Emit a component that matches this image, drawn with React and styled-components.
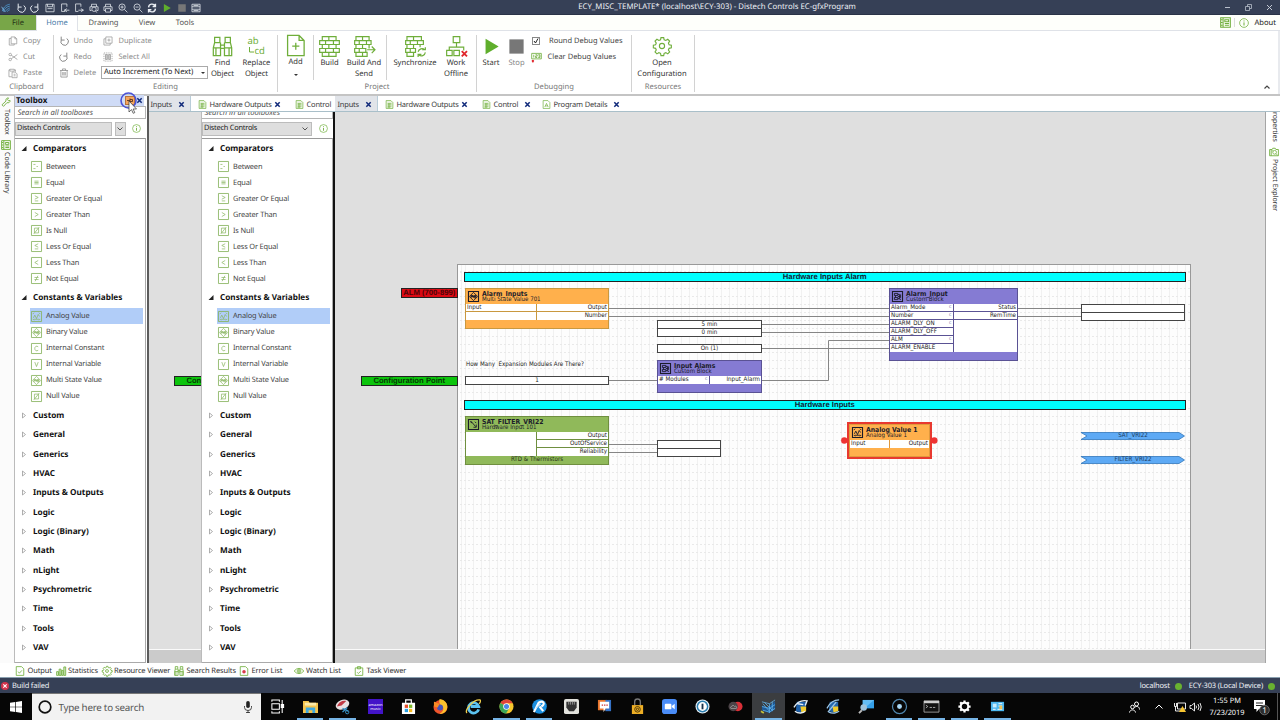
import React from "react";
import styled, { createGlobalStyle, css } from "styled-components";

const GREEN = "#6fae3a";
const NAVY = "#364056";
const UI = `"Noto Sans", "Open Sans", sans-serif`;
const BLOCK = `"DejaVu Sans Condensed", "DejaVu Sans", sans-serif`;

const Global = createGlobalStyle`
  * { box-sizing: border-box; }
  body { margin: 0; overflow: hidden; background: #fff; font-family: ${UI}; font-size: 7.5px; color: #333; text-rendering: geometricPrecision; }
  svg { display: block; flex: none; overflow: visible; }
`;

/* ---------- icons ---------- */

const ICONS = {
  logo: <><path d="M2 13C5 5 9 3 14 2M4 14c2-6 5-8 10-9M7 14c2-4 4-5 7-6M10 14c1-2 2-3 4-3" stroke="#4ea3e0" /><path d="M1 6l5 8" stroke="#8cc4ee" /></>,
  undo: <path strokeWidth="1.600" d="M3.500 1v5.500H9M3.500 6.500A6 6 0 1 0 12.500 4" />,
  redo: <path strokeWidth="1.600" d="M12.500 1v5.500H7M12.500 6.500A6 6 0 1 1 3.500 4" />,
  save: <path d="M1.500 2h13v12h-13zM4 2v4h8V2M4 9h8" />,
  docIn: <path d="M11 6V1.500H2.500v12H8M11 9l-4 2.500L11 14M7 11.500h8" />,
  docOut: <path d="M11 6V1.500H2.500v12H7M11 9l4 2.500-4 2.500M15 11.500H7" />,
  preview: <><path d="M4 6V2h8v4M4 12H1.500V6h13v6H12" /><circle cx="8" cy="10" r="3.500" /><path d="M10 13l3 2" /></>,
  print: <path d="M4 6V2h8v4M4 12H1.500V6h13v6H12M4 9h8v5.500H4z" />,
  zoomIn: <><circle cx="6.500" cy="6.500" r="5" /><path d="M10.500 10.500L15 15M4 6.500h5M6.500 4v5" /></>,
  zoomOut: <><circle cx="6.500" cy="6.500" r="5" /><path d="M10.500 10.500L15 15M4 6.500h5" /></>,
  sync: <path strokeWidth="2.200" d="M2.500 7A5.500 5.500 0 0 1 13 5M13.500 9A5.500 5.500 0 0 1 3 11M13.500 1v4.500H9M2.500 15v-4.500H7" />,
  play: <path d="M3 1.500l11 6.500-11 6.500z" fill="#5fae2c" stroke="none" />,
  stop: <path d="M2 2h12v12H2z" fill="#777" stroke="none" />,
  panel: <path d="M1.500 2h13v12h-13zM1.500 6h13M1.500 10h13M4 4h8M4 12h8" />,
  copy: <path d="M5 1.500h6l3 3v8H5zM11 1.500v3h3M5 4H2v10.500h8v-2" />,
  cut: <><circle cx="3.500" cy="4" r="2" /><circle cx="3.500" cy="12" r="2" /><path d="M5 5l10 7M5 11l10-7" /></>,
  paste: <path d="M3 3H1.500v11H6M3 2h7v3H3zM10 3h2v3M6.500 6.500h5l3 3v6h-8zM9 10h3M9 12.500h3" />,
  trash: <path d="M1.500 4h13M5.500 4V1.500h5V4M3 4v10.500h10V4M6 6.500v5.500M8 6.500v5.500M10 6.500v5.500" />,
  duplicate: <path d="M4.500 1.500h10v10h-10zM4.500 4.500h-3v10h10v-3M9.500 4v5M7 6.500h5" />,
  select: <><path strokeDasharray="2 1.500" d="M1.500 1.500h13v13h-13z" /><path d="M4 4h3v8H4zM9 4h3v8H9z" fill="#ccc" /></>,
  find: <path d="M2 1h4v4H2zM10 1h4v4h-4zM2 5L1 9v6h5.500V5M14 5l1 4v6H9.500V5M6.500 7h3M6.500 9.500h3M1 9h5.500M9.500 9H15M3 9v6M13 9v6" />,
  add: <path d="M2.500 1h8l3.500 3.500V15H2.500zM10.500 1v3.500H14M8.200 6v5M5.700 8.500h5" />,
  bricks: <path d="M2.500 .5h5v3h-5zM7.500 .5h5.500v3H7.500zM.5 3.500h4.500v3H.5zM5 3.500h6v3H5zM11 3.500h4.500v3H11zM2.500 6.500h5v3h-5zM7.500 6.500h5.500v3H7.500zM.5 9.500h4.500v3H.5zM5 9.500h6v3H5zM11 9.500h4.500v3H11zM2.500 12.500h5v3h-5zM7.500 12.500h5.500v3H7.500z" />,
  bricksSend: <><path d="M1.500 .5h5v3h-5zM6.500 .5h5v3h-5zM.5 3.500H4v3H.5zM4 3.500h5.500v3H4zM9.500 3.500H13v3H9.500zM1.500 6.500h5v3h-5zM6.500 6.500h5v3M.5 9.500H4v3H.5zM4 9.500h5v3H4zM1.500 12.500h5v3h-5zM6.500 12.500H10v3H6.500z" /><path d="M10 10.500h6M13.500 8l2.500 2.500-2.500 2.500" /></>,
  bricksSync: <><path d="M1.500 .5h5v3h-5zM6.500 .5h6v3h-6zM.5 3.500H4v3H.5zM4 3.500h5.500v3H4zM9.500 3.500H14v3H9.500zM1.500 6.500h5v3h-5zM6.500 6.500h5v2M.5 9.500H4v3H.5zM4 9.500h4v3H4zM1.500 12.500h5v3h-5z" /><path d="M10 12a3 3 0 0 1 5-1.500M15.500 12.500a3 3 0 0 1-5 1.800M15.500 8.500v2H13M10 16v-2h2.500" /></>,
  offline: <><path d="M5.500 .5h5v4.500h-5zM8 5v4M2.500 11V8.500h11V11M.5 11h4.200v4H.5zM6 11h4.200v4H6z" /><path stroke="#e0262c" strokeWidth="1.400" d="M12 11.500l4 4M16 11.500l-4 4" /></>,
  clearDebug: <><path d="M1 2h14v8H1zM4 4v4M6.500 4H9v2H6.500v2H9M10.500 4H13v4h-2.500M11 6h2" /><path stroke="#e0262c" strokeWidth="2" d="M1.500 12l2.500 2.500M4 12l-2.500 2.500" /></>,
  gear: <><circle cx="8" cy="8" r="2.300" /><path d="M6.800 1h2.400l.4 2 1.500.6 1.700-1.100 1.700 1.700-1.100 1.700.6 1.500 2 .4v2.400l-2 .4-.6 1.500 1.100 1.700-1.700 1.700-1.700-1.100-1.500.6-.4 2H6.800l-.4-2-1.500-.6-1.700 1.100-1.700-1.700 1.100-1.700L2 10.600l-2-.4V7.800l2-.4.6-1.500-1.100-1.700 1.700-1.700 1.700 1.100L6.400 3z" transform="translate(.3 -.5)" /></>,
  info: <><circle cx="8" cy="8" r="7" /><path strokeWidth="1.600" d="M8 7v5M8 4v1.500" /></>,
  book: <path strokeWidth="1.500" d="M1 1h14v14H1zM4.500 1v14M1.500 4h2M1.500 8h2M1.500 12h2M7 4h5.500v3H7zM7 9.500h6M7 12h6" />,
  wrench: <path strokeWidth="1.400" d="M1.500 12.500L8 6.500C7 4 9 1 12 1.500L10.500 4l1.500 2 2.500-.5C15 8.500 12 10 9.500 9L4 15z" />,
  explorer: <><path strokeWidth="1.400" d="M1 4h4l1-2h4l1 2h4v10H1zM3.500 4v10" /><circle cx="9" cy="8.500" r="3" /><path d="M11 10.500l3 3M5 6h2" /></>,
  sheet: <><path d="M2 1h8.500L14 4.500V15H2z" fill="#eef6e6" /><path d="M4.500 6h7M4.500 8.500h7M4.500 11h7M7 6v6.500M4.500 13h5" /></>,
  sheetA: <path d="M2 1h8.500L14 4.500V15H2zM5 12.500L8 6l3 6.500M6 10.500h4" />,
  close: <path stroke="#10297a" strokeWidth="3.500" d="M3 3l10 10M13 3L3 13" />,
  output: <path d="M2 1h8.500L14 4.500V15H2zM5 9l2 2.500 4-4.500" />,
  stats: <path d="M1 9h3v6H1zM5 5h3v10H5zM9 7h2.500v8H9zM12.500 1.500h3V15h-3z" fill="#d5e8c4" />,
  error: <><path d="M2 1h8.500L14 4.500V15H2z" /><circle cx="8" cy="9" r="2.800" fill="#d83a4a" stroke="none" /></>,
  eye: <><path d="M.5 8C4 2.500 12 2.500 15.500 8 12 13.500 4 13.500 .5 8z" /><circle cx="8" cy="8" r="3" /><circle cx="8" cy="8" r="1" /></>,
  task: <path d="M2 3h12v12H2zM5.500 1h5v3.500h-5zM5 10l2 2 4-4" />,
};

const Icon = ({ name, size = 10, color = GREEN, sw = 1.2 }) => (
  <svg width={size} height={size} viewBox="0 0 16 16" fill="none" stroke={color} strokeWidth={sw}>{ICONS[name]}</svg>
);

const TINY = {
  between: "M3.500 5h3M3.500 11h3M8 8h2",
  eq: "M5 6h6M5 8h6M5 10h6",
  ge: "M5.500 4l5 2.500-5 2.500M5.500 11.500h5",
  gt: "M5.500 5l5 3-5 3",
  nul: "M5 4.500h6v7H5zM4 13l8-10",
  le: "M10.500 4l-5 2.500 5 2.500M5.500 11.500h5",
  lt: "M10.500 5l-5 3 5 3",
  ne: "M5 6.500h6M5 9.500h6M6 12l4-8",
  av: "M3.500 10l2-4 2.500 5 2.500-6 2 3M2.500 4.500l2-2M11.500 2.500l2 2M2.500 11.500l2 2M11.500 13.500l2-2M4 12h8",
  bv: "M8 2l6 6-6 6-6-6zM4.500 10V6.500h3V10M9 6.500h2.500V10H9zM4 8h8",
  c: "M10.500 5.500C8 3.500 5.500 5 5.500 8s2.500 4.500 5 2.500",
  v: "M5.500 4.500L8 11l2.500-6.500",
  block: "M3.500 3.500h5v3h-5zM3.500 9.500h5v3h-5zM5 6.500v3M8.500 5H11v6H8.500M10 11l3 1.500M12.500 5v5M8.500 8h3",
  hw: "M3 4h2l6 7M5 4v2M12 8v4H8M10 4l2 2",
};

const Tiny = ({ name, color = "#86b35c", size = 11, sw = 1 }) => (
  <svg width={size} height={size} viewBox="0 0 16 16" fill="none" stroke={color} strokeWidth={sw}>
    <path d="M.700 .700h14.600v14.600H.700z" strokeWidth={sw * 1.2} />
    <path d={TINY[name]} />
  </svg>
);

/* ---------- frame ---------- */

const Screen = styled.div`
  width: 1280px; height: 720px; display: flex; flex-direction: column; overflow: hidden; white-space: nowrap;
`;
const TitleBar = styled.header`
  height: 15px; background: ${NAVY}; color: #eef1f6; display: grid; grid-template-columns: 205px 1fr 53px;
  align-items: center; border-bottom: 1px solid #2a3347;
`;
const QuickBar = styled.div`display: flex; gap: 4.65px; padding-left: 1px;`;
const WindowTitle = styled.div`text-align: center; font-size: 7.8px; line-height: 15px; padding-left: 2px;`;
const WindowButtons = styled.div`display: flex; gap: 14px; justify-content: flex-end; padding-right: 7px;`;
const MenuBar = styled.nav`
  height: 16px; background: #fefffb; display: flex; align-items: stretch; border-bottom: 1px solid #dfe2e8; font-size: 7.6px; line-height: 16px;
`;
const MenuTab = styled.div`
  width: ${(p) => p.$w}px; text-align: center; color: #555;
  ${(p) => p.$file && css`background: #78a648; color: #243316;`}
  ${(p) => p.$active && css`background: #fff; color: #4a7ba8; border: 1px solid #dfe2e8; border-bottom: 0; margin-bottom: -1px; line-height: 14px;`}
`;
const MenuRight = styled.div`margin-left: auto; display: flex; align-items: center; padding-right: 4px; color: #222;`;
const MenuRule = styled.i`width: 1px; height: 9px; background: #ddd; margin: 0 4px 0 3px;`;
const About = styled.span`margin-left: 5px;`;

/* ---------- ribbon ---------- */

const Ribbon = styled.section`
  height: 63px; background: #fff; display: flex; padding-top: 4px; border-right: 2px solid #e8eaee;
`;
const RibbonGroup = styled.div`
  width: ${(p) => p.$w}px; height: 57px; border-right: 1px solid #d2d2d2; display: flex; flex-direction: column;
`;
const GroupBody = styled.div`height: 47px; display: flex;`;
const GroupName = styled.div`text-align: center; color: #777; font-size: 7.6px; line-height: 10px;`;
const SmallColumn = styled.div`width: ${(p) => p.$w}px; display: flex; flex-direction: column;`;
const SmallButton = styled.div`
  height: 16px; margin-top: ${(p) => p.$mt || 0}px; display: flex; align-items: center; gap: ${(p) => p.$gap || 6}px;
  padding-left: ${(p) => p.$pl || 0}px; color: ${(p) => (p.$on ? "#444" : "#8c8c8c")}; font-size: 7.5px; line-height: 16px;
`;
const Combo = styled.div`
  width: 107px; height: 13px; margin-top: 1px; border: 1px solid #aaa; display: flex; justify-content: space-between; align-items: center;
  padding: 0 2px; font-size: 7.6px; line-height: 11px; color: #222;
`;
const Caret = styled.i`border: 2px solid transparent; border-top-color: #333; border-bottom: 0;`;
const BigButton = styled.div`
  width: ${(p) => p.$w}px; display: flex; flex-direction: column; align-items: center; color: ${(p) => (p.$dim ? "#888" : "#333")};
  font-size: 7.6px; line-height: 11px; text-align: center; white-space: pre;
`;
const BigIcon = styled.div`height: 24px; margin-top: -1px; display: flex; align-items: center;`;
const Rule = styled.i`width: 1px; height: 45px; background: #d2d2d2; margin-left: ${(p) => p.$ml || 0}px;`;
const Collapse = styled.div`margin-left: auto; align-self: flex-end; padding: 0 8px 5px 0;`;
const Check = styled.i`
  width: 8px; height: 8px; border: 1px solid #888; display: grid; place-items: center;
`;
const AbCd = styled.div`
  color: ${GREEN}; font-size: 9.5px; line-height: 10px; text-align: left; width: 18px; position: relative;
  span { display: block; } span + span { padding-left: 7px; }
  svg { position: absolute; left: 1px; top: 11px; }
`;

/* ---------- work area ---------- */

const Work = styled.main`
  height: 569px; display: grid; grid-template-columns: 14px 135px 186px 945px; border-top: 2px solid #c4c4c4;
`;
const Rail = styled.aside`
  display: flex; flex-direction: column; align-items: center; font-size: 7px; line-height: 12px; color: #333; overflow: hidden;
`;
const RailText = styled.span`writing-mode: vertical-rl; height: ${(p) => p.$h}px; flex: none;`;
const LeftRail = styled(Rail)`padding: 1px 3px 0 0; background: #fbfbfb; gap: 2px;`;
const RightRail = styled(Rail)`width: 14px; padding-left: 2px; gap: 2px;`;
const ToolPanel = styled.section`
  display: flex; flex-direction: column; height: 567px; min-width: 0; overflow: hidden; background: #fff;
`;
const DockPanel = styled(ToolPanel)`border-left: 1px solid #bbb; border-right: 2px solid #5c5c5c; overflow: visible;`;
const ClippedPanel = styled(ToolPanel)`
  height: 551px; width: 134px; border-left: 1px solid #bbb; border-right: 2px solid #111;
`;
const PanelHead = styled.div`
  height: 11px; flex: none; width: 129px; margin-top: -1px; background: #cfdbf6; color: #111; font-weight: 700; font-size: 8.1px; line-height: 10px;
  display: flex; align-items: center; padding: 0 1px; position: relative;
`;
const Pin = styled.i`margin-left: auto; width: 10px; height: 9px; background: #f6a55c; border: 1px solid #b9743a; margin-right: 1px; display: grid; place-items: center;`;
const Search = styled.div`
  height: 13px; flex: none; width: 131px; margin-top: ${(p) => p.$mt || 0}px; border: 1px solid #b5b5b5; border-left: 0; padding-left: 2.500px;
  font-style: italic; color: #555; font-size: 7.6px; line-height: 12.500px;
`;
const Picker = styled.div`height: 19px; flex: none; display: flex; align-items: center;`;
const PickerBox = styled.div`
  width: ${(p) => p.$w}px; height: 14px; background: #dedede; border: 1px solid #bcbcbc; padding: 0 3px 0 1px; font-size: 7.4px; letter-spacing: -.24px;
  line-height: 13px; color: #222; display: flex; justify-content: space-between; align-items: center; margin-right: ${(p) => p.$mr || 0}px;
`;
const Tree = styled.div`
  flex: 1; width: 131px; border-top: 1px solid #999; border-right: 1px solid #aaa; border-bottom: 1px solid #aaa; overflow: hidden;
  > :first-child { margin-top: -.400px; }
`;
const TreeHead = styled.div`
  height: 19.35px; display: flex; align-items: center; padding-left: 5.500px; font-weight: 700; font-size: 8.2px; color: #111;
  svg { margin-right: 5.500px; }
`;
const TreeItems = styled.div`padding: 1px 2px 1.200px 15px;`;
const TreeItem = styled.div`
  height: 16px; display: flex; align-items: center; gap: 4px; padding-left: 1px; color: #444; font-size: 7.4px; letter-spacing: -.15px;
  background: ${(p) => (p.$sel ? "#b1cdf8" : "transparent")};
`;
const Middle = styled.div`overflow: hidden; display: flex; flex-direction: column;`;
const MiddleBody = styled.div`display: flex; height: 551px;`;
const Right = styled.div`display: flex; flex-direction: column; overflow: hidden;`;
const RightBody = styled.div`display: flex; height: 551px;`;

const TabStrip = styled.div`height: 16px; flex: none; display: flex; background: #fff; overflow: hidden;
  border-bottom: 1px solid #a9bfc9;`;
const Tab = styled.div`
  width: ${(p) => p.$w}px; flex: none; display: flex; align-items: center; gap: 2.500px; padding: 2px ${(p) => p.$pr || 5}px 0 7px;
  font-size: 7.5px; letter-spacing: -.2px; color: #3c3c3c;
`;
const TabLabel = styled.span`flex: 1;`;
const CutTab = styled(Tab)`
  background: #e1e4e9; padding-left: 0; justify-content: flex-end; overflow: hidden; gap: 6px; border-right: 1px solid #b9cdd9;
`;
const Canvas = styled.div`
  width: ${(p) => p.$w}px; flex: none; height: 551px; background: #dfdfdf; position: relative; overflow: hidden;
  border-right: ${(p) => (p.$edge ? "1px solid #a5a5a5" : "0")};
`;
const ScrollTrack = styled.div`
  position: absolute; left: 0; right: 0; bottom: 0; height: 14px; background: #cbcbcb; border-top: 1px solid #fafafa;
`;

/* ---------- diagram ---------- */

const ORIGIN = { x: 335, y: 112 };
const Placed = styled.div`
  position: absolute; left: ${(p) => p.$x - (p.$ox ?? ORIGIN.x)}px; top: ${(p) => p.$y - ORIGIN.y}px;
  width: ${(p) => p.$w}px; height: ${(p) => p.$h}px; font-family: ${BLOCK}; font-size: 6.2px; line-height: 7px; color: #222;
`;
const Page = styled(Placed)`
  border: 1px solid #999; border-bottom: 0; background-color: #fdfdfd;
  background-image: repeating-linear-gradient(90deg, #fdfdfd 0 2px, transparent 2px 4px),
    repeating-linear-gradient(#e9e9e9 0 1px, transparent 1px 8px), repeating-linear-gradient(90deg, #f1f1f1 0 1px, transparent 1px 8px);
  background-position: 0 0, 0 7px, 7px 0;
`;
const Banner = styled(Placed)`
  background: ${(p) => p.$bg || "#00ffff"}; border: 1px solid #222; font-family: "Liberation Sans", sans-serif; font-weight: 700;
  font-size: 7.7px; line-height: 8.500px; text-align: center; color: ${(p) => p.$fg || "#123"};
`;
const Value = styled(Placed)`background: #fff; border: 1px solid #444; text-align: center; line-height: 7px;`;
const Note = styled(Placed)`color: #222; line-height: 9px;`;
const Block = styled(Placed)`
  background: ${(p) => p.$c}; border: 1px solid ${(p) => p.$line}; display: flex; flex-direction: column;
  ${(p) => p.$hot && css`outline: 2px solid #e8392f; outline-offset: 0;`}
`;
const BlockHead = styled.div`height: 15px; flex: none; display: flex; align-items: center; gap: 3px; padding-left: 2px; line-height: 6px; font-size: 6.1px; color: #1c1c2a;
  b { display: block; font-size: 6.8px; line-height: 6px; }`;
const Ports = styled.div`display: grid; grid-template-columns: 1fr 1fr; background: #fff; height: ${(p) => p.$n * 8}px; flex: none;`;
const PortColumn = styled.div`
  border-right: ${(p) => (p.$first ? `1px solid ${p.$line}` : 0)}; text-align: ${(p) => (p.$first ? "left" : "right")};
`;
const Port = styled.div`
  height: 8px; padding: 0 1px; line-height: 7.500px; border-bottom: ${(p) => (p.$last ? 0 : `1px solid ${p.$line}`)};
  display: flex; justify-content: ${(p) => (p.$right ? "flex-end" : "space-between")};
  i { font-style: normal; color: #77a; font-size: 5px; }
`;
const BlockFoot = styled.div`flex: 1; text-align: center; line-height: 8px; color: #263015;`;
const Wires = styled.svg`position: absolute; left: 0; top: 0;`;
const Flag = styled(Placed)`
  display: grid; text-align: center; line-height: 8px; color: #1d3a5c;
  > * { grid-area: 1 / 1; position: relative; }
`;

const FunctionBlock = ({ x, y, w, h, color, line, hot, icon, title, sub, left = [], right = [], rows, foot }) => {
  const n = rows || Math.max(left.length, right.length);
  return (
    <Block $x={x} $y={y} $w={w} $h={h} $c={color} $line={line} $hot={hot}>
      <BlockHead><Tiny name={icon} color="#1c1c2a" size={11} sw={1.3} /><div><b>{title}</b>{sub}</div></BlockHead>
      <Ports $n={n}>
        <PortColumn $first $line={line}>{left.map(([t, dot], i) => <Port key={i} $line={line} $last={i === n - 1}><span>{t}</span>{dot && <i>c</i>}</Port>)}</PortColumn>
        <PortColumn>{right.map((t, i) => <Port key={i} $right $line={line} $last={i === n - 1}>{t}</Port>)}</PortColumn>
      </Ports>
      <BlockFoot>{foot}</BlockFoot>
    </Block>
  );
};

const OutFlag = ({ x, y, text }) => (
  <Flag $x={x} $y={y} $w={104} $h={8}>
    <svg width="104" height="8" viewBox="0 0 104 8"><path d="M0 .5h98l5.500 3.500-5.500 3.500H0L6 4z" fill="#5eaaf5" stroke="#3277bb" strokeWidth=".8" /></svg>
    <span>{text}</span>
  </Flag>
);

const VALUES = [
  [657, 320, 105, "5 min", 9], [657, 328, 105, "0 min", 9], [657, 344, 105, "On (1)", 9], [465, 376, 144, "1", 9],
  [1081, 304, 104, "", 9], [1081, 312, 104, "", 9], [657, 440, 64, "", 9], [657, 448, 64, "", 9],
];
const WIRES = "M609 308.500H889M609 316.500H889M761 324.500H889M761 332.500H889M761 348.500H889M609 380.500H657M761 380.500H828.500V340.500H889M1017 308.500H1081M1017 316.500H1081M609 444.500H657M609 452.500H657";

const Diagram = () => (
  <Canvas $w={931} $edge>
    <Page $x={457} $y={264} $w={734} $h={386} />
    <Wires width="931" height="551" viewBox={`${ORIGIN.x} ${ORIGIN.y} 931 551`} fill="none" stroke="#858585" strokeWidth="1"><path d={WIRES} /></Wires>
    <Banner $x={464} $y={272} $w={721.500} $h={10}>Hardware Inputs Alarm</Banner>
    <Banner $x={464} $y={400} $w={721.500} $h={10}>Hardware Inputs</Banner>
    <Banner $x={401} $y={288} $w={56.500} $h={10} $bg="#dc0a14" $fg="#4a0508">ALM (700-899)</Banner>
    <Banner $x={361} $y={376} $w={96.500} $h={10} $bg="#0cc40c" $fg="#063806">Configuration Point</Banner>
    {VALUES.map(([x, y, w, t, h], i) => <Value key={i} $x={x} $y={y} $w={w} $h={h}>{t}</Value>)}
    <Note $x={466} $y={360} $w={130} $h={8}>How Many&nbsp; Expansion Modules Are There?</Note>
    <FunctionBlock x={465} y={288} w={144} h={41} color="#ffb04c" line="#c9983f" icon="bv" title="Alarm_Inputs" sub="Multi State Value 701" left={[["Input"], [""]]} right={["Output", "Number"]} />
    <FunctionBlock x={889} y={288} w={129} h={73} color="#857bd3" line="#5a5294" icon="block" title="Alarm_Input" sub="Custom Block"
      left={[["Alarm_Mode", 1], ["Number", 1], ["ALARM_DLY_ON", 1], ["ALARM_DLY_OFF"], ["ALM", 1], ["ALARM_ENABLE"]]} right={["Status", "RemTime"]} />
    <FunctionBlock x={657} y={360} w={105} h={33} color="#857bd3" line="#5a5294" icon="block" title="Input Alams" sub="Custom Block" left={[["# Modules", 1]]} right={["Input_Alarm"]} />
    <FunctionBlock x={465} y={416} w={144} h={49} color="#90b95a" line="#6f8f3f" icon="hw" title="SAT_FILTER_VRI22" sub="Hardware Input 101" right={["Output", "OutOfService", "Reliability"]} foot="RTD & Thermistors" />
    <FunctionBlock x={849} y={424} w={81} h={33} color="#ffb04c" line="#e0993c" hot icon="av" title="Analog Value 1" sub="Analog Value 1" left={[["Input"]]} right={["Output"]} />
    <Wires width="931" height="551" viewBox={`${ORIGIN.x} ${ORIGIN.y} 931 551`} fill="#ee3333"><circle cx="844.300" cy="440.500" r="3.200" /><circle cx="934.300" cy="440.500" r="3.200" /></Wires>
    <OutFlag x={1081} y={432} text="SAT_VRI22" />
    <OutFlag x={1081} y={456} text="FILTER_VRI22" />
    <ScrollTrack />
  </Canvas>
);

/* ---------- toolbox ---------- */

const COMPARATORS = [["between", "Between"], ["eq", "Equal"], ["ge", "Greater Or Equal"], ["gt", "Greater Than"], ["nul", "Is Null"], ["le", "Less Or Equal"], ["lt", "Less Than"], ["ne", "Not Equal"]];
const CONSTANTS = [["av", "Analog Value"], ["bv", "Binary Value"], ["c", "Internal Constant"], ["v", "Internal Variable"], ["bv", "Multi State Value"], ["nul", "Null Value"]];
const CLOSED = ["Custom", "General", "Generics", "HVAC", "Inputs & Outputs", "Logic", "Logic (Binary)", "Math", "nLight", "Psychrometric", "Time", "Tools", "VAV"];

const Arrow = ({ open }) => (
  <svg width="7" height="7" viewBox="0 0 7 7">
    {open ? <path d="M5.500 1v5h-5z" fill="#222" /> : <path d="M1.500 1L4.500 3.500 1.500 6z" fill="none" stroke="#999" strokeWidth=".8" />}
  </svg>
);
const Category = ({ name, items, selected }) => (
  <>
    <TreeHead><Arrow open={!!items} />{name}</TreeHead>
    {items && <TreeItems>{items.map(([ic, t]) => <TreeItem key={t} $sel={t === selected}><Tiny name={ic} />{t}</TreeItem>)}</TreeItems>}
  </>
);
const ToolTree = () => (
  <Tree>
    <Category name="Comparators" items={COMPARATORS} />
    <Category name="Constants & Variables" items={CONSTANTS} selected="Analog Value" />
    {CLOSED.map((c) => <Category key={c} name={c} />)}
  </Tree>
);
const Chevron = () => <svg width="6" height="4" viewBox="0 0 6 4"><path d="M.5 .5L3 3 5.500 .5" fill="none" stroke="#444" strokeWidth=".9" /></svg>;

const CursorMark = styled.div`position: absolute; left: 105px; top: -3px; z-index: 3;`;
const Pointer = () => (
  <CursorMark>
    <svg width="24" height="24" viewBox="0 0 24 24">
      <circle cx="8.500" cy="8.500" r="7.500" fill="none" stroke="#4a52d6" strokeWidth="1.600" />
      <path d="M9 9v11l2.500-2.400 1.700 3.700 1.600-.7-1.700-3.600h3.400z" fill="#fff" stroke="#333" strokeWidth=".7" />
    </svg>
  </CursorMark>
);
const CloseMark = () => <Icon name="close" size={7} />;
const Docs = ({ full }) => (
  <TabStrip>
    <CutTab $w={full ? 43 : 42}><span>Inputs</span><CloseMark /></CutTab>
    <Tab $w={97} $pr={11}><Icon name="sheet" size={9} /><TabLabel>Hardware Outputs</TabLabel><CloseMark /></Tab>
    <Tab $w={full ? 60 : 47} $pr={full ? 4.5 : 1}><Icon name="sheet" size={9} /><TabLabel>Control</TabLabel>{full && <CloseMark />}</Tab>
    {full && <Tab $w={89} $pr={4.5}><Icon name="sheetA" size={9} /><TabLabel>Program Details</TabLabel><CloseMark /></Tab>}
  </TabStrip>
);

/* ---------- bottom ---------- */

const OutputTabs = styled.div`height: 14px; background: #fff; display: flex; font-size: 7.5px; letter-spacing: -.12px; line-height: 13px; padding: 2px 0 0 15px; color: #333;`;
const OutputTab = styled.div`width: ${(p) => p.$w}px; flex: none; display: flex; align-items: center; gap: 2.500px;`;
const Status = styled.footer`
  height: 16px; background: ${NAVY}; border-top: 1px solid #8aa0b0; color: #eef1f6; display: flex; align-items: center; font-size: 7.5px; letter-spacing: -.18px;
  padding: 1px 5px 0 1px; gap: 3px;
`;
const Spacer = styled.i`flex: 1;`;
const Dot = styled.i`width: 7px; height: 7px; border-radius: 50%; background: #69b130; margin: 0 ${(p) => p.$m || 0}px 0 2px;`;
const Taskbar = styled.div`height: 27px; background: #060606; display: flex; color: #fff;`;
const StartButton = styled.div`width: 32px; display: grid; place-items: center;`;
const SearchBox = styled.div`
  width: 229px; background: #f2f2f2; border-top: 1px solid #777; display: flex; align-items: center; gap: 6.500px; padding: 0 9px 0 6px; color: #555;
  font-size: 9.800px; letter-spacing: -.25px;
  svg:last-child { margin-left: auto; }
`;
const TaskButton = styled.div`
  width: 32.720px; flex: none; display: grid; place-items: center; position: relative; background: ${(p) => (p.$active ? "#3b3d40" : "none")};
  &::after { content: ""; position: absolute; bottom: 0; left: 3px; right: 3px; height: 2px; background: ${(p) => (p.$run ? "#76b4e6" : "transparent")}; }
`;
const Tray = styled.div`margin-left: auto; display: flex; align-items: center; padding-right: 2px;`;
const Clock = styled.div`width: 42px; text-align: center; font-size: 7.4px; line-height: 12px; margin: 0 4px 0 4px;`;
const DesktopEdge = styled.i`width: 1px; height: 27px; background: #555; margin-left: 5px;`;

const W = { fill: "none", stroke: "#fff", strokeWidth: 1.1 };
const APPS = [
  ["view", 0, <g {...W}><path d="M2 3V1h8v2M2 5h8v6H2zM2 13v2h8v-2M13 1v14" /><path d="M12 6h2.500v3H12z" fill="#fff" /></g>],
  ["files", 1, <><path d="M0 2h6l1 2h9v11H0z" fill="#f4c44e" /><path d="M2 4h12v3H2z" fill="#fbe9a8" /><path d="M3 15V9h10v6h-3v-3H6v3z" fill="#3fa9e0" /></>],
  ["snip", 1, <><ellipse cx="8" cy="6" rx="7.500" ry="5" fill="#e9e2e2" transform="rotate(-20 8 6)" /><path d="M2 8c2-5 6-7 10-6l-5 5z" fill="#c23b45" /><path d="M8 10l6 3M13 9l-5 5" stroke="#3b94c9" strokeWidth="1.500" /><circle cx="13" cy="14" r="1.800" fill="none" stroke="#3b94c9" /></>],
  ["music", 0, <><path d="M0 0h16v16H0z" fill="#4314c8" /><text x="8" y="7" fontSize="4" fill="#fff" textAnchor="middle">amazon</text><text x="8" y="12" fontSize="4" fill="#fff" textAnchor="middle">music</text></>],
  ["store", 0, <><path d="M1 4h14v12H1z" fill="#fff" /><path d="M5 5V1h6v4" fill="none" stroke="#fff" strokeWidth="1.300" /><path d="M4 6h3.500v3.500H4z" fill="#e84f2a" /><path d="M8.500 6H12v3.500H8.500z" fill="#7db928" /><path d="M4 10.500h3.500V14H4z" fill="#2a9fe0" /><path d="M8.500 10.500H12V14H8.500z" fill="#f5b81e" /></>],
  ["firefox", 0, <><circle cx="8" cy="8.500" r="7.500" fill="#f0552b" /><path d="M7 0c7 1 9 6 8 10-1 4-5 6-8 6 5-3 5-7 2-9C7 6 6 3 7 0z" fill="#fbc12c" /><circle cx="7.500" cy="9" r="3.200" fill="#4653b8" /><path d="M1 3c2 0 3 2 6 2L5 9 1 8z" fill="#f98b24" /></>],
  ["ie", 0, <><path d="M13.500 11A5.500 5.500 0 1 1 13.500 8H5" fill="none" stroke="#5cc3f1" strokeWidth="3" /><path d="M1 15C-2 12 8 0 15 1c1 1 0 3-1 4" fill="none" stroke="#f0cf4d" strokeWidth="1.400" /></>],
  ["chrome", 1, <><circle cx="8" cy="8" r="7.500" fill="#f6c62d" /><path d="M8 8L1.500 4.200A7.500 7.500 0 0 1 14.700 4.500H8z" fill="#e0443a" /><path d="M8 8L1.500 4.200A7.500 7.500 0 0 0 7.500 15.500L11 9.500z" fill="#3ba757" /><circle cx="8" cy="8" r="3.500" fill="#fff" /><circle cx="8" cy="8" r="2.700" fill="#4a86e8" /></>],
  ["revu", 1, <><circle cx="8" cy="8" r="7.800" fill="#1a8fe0" /><path d="M2 14L7 4c5-3 8 1 3 4M8 8l4 5" fill="none" stroke="#fff" strokeWidth="2.200" /><path d="M4 10l5-5" stroke="#bfe3fa" strokeWidth="1.500" /></>],
  ["port", 0, <><rect width="16" height="16" rx="2" fill="#e3e3de" /><path d="M2.500 3h11v6l-3 4h-5l-3-4z" fill="#333" /><path d="M5 3v3M7 3v3M9 3v3M11 3v3" stroke="#aaa" strokeWidth=".8" /></>],
  ["chat", 0, <><path d="M1 1h10v11H1z" fill="#e9742a" /><path d="M9 1h6v12H9z" fill="#3572c6" /><path d="M3 3h10v7H9l-2 4V10H3z" fill="#fff" /><path d="M5 6.500h1.500M7.500 6.500H9M10 6.500h1.500" stroke="#c33" strokeWidth="1.200" /></>],
  ["lock", 0, <><path d="M5 7V3a3 3 0 0 1 6 0v4" fill="none" stroke="#777" strokeWidth="1.400" /><path d="M2 6.500h12V16H2z" fill="#edae25" /><circle cx="8" cy="11" r="3" fill="none" stroke="#4a3508" /><circle cx="8" cy="11" r="1.200" fill="none" stroke="#4a3508" /></>],
  ["zoom", 0, <><rect width="16" height="16" rx="3" fill="#4a8cf7" /><rect x="3" y="5" width="7" height="6" rx="1" fill="#fff" /><path d="M10.500 7.500L13.500 5v6l-3-2.500z" fill="#fff" /></>],
  ["onepass", 0, <><circle cx="8" cy="8" r="7.500" fill="#e9f1f7" /><circle cx="8" cy="8" r="5.500" fill="#fff" stroke="#2b7dae" strokeWidth="1.600" /><path d="M7 5h2v6H7z" fill="#17324a" /></>],
  ["cloud", 0, <><circle cx="10.500" cy="8" r="5" fill="#d93038" /><circle cx="5.500" cy="8" r="5" fill="#4b4347" /><path d="M3 10h6c1-2-1-3-2-2-1-2-3-1-3 0-1 0-2 1-1 2z" fill="none" stroke="#999" /></>],
  ["gfx", 2, <><path d="M1 7l6 2 8-7v9l-6 4-8-3z" fill="#1d5a98" /><path d="M1 3l8 2 6-4M1 8l8 2 6-4M2 5l7 8M9 5v10M12 3v10M4 4l8 8M2 12l7 2 6-4" fill="none" stroke="#65b7ee" strokeWidth=".8" /><path d="M0 13l3 2" stroke="#c9c33a" strokeWidth="1.800" /></>],
  ["net1", 0, <><path d="M4 3h10v6l-4 6-7-2z" fill="#1c5ea8" /><path d="M8 8h6v5l-5 2z" fill="#f0ca2c" /><path d="M1 9C5 2 10 1 15 2l-2 5M5 5l6 1M2 13c4 3 9 2 11 0" fill="none" stroke="#e6eef4" strokeWidth="1.500" /></>],
  ["net2", 0, <><path d="M4 3h9v9l-3 3-7-2z" fill="#2467ad" /><path d="M7 8h6v5l-5 1z" fill="#f0ca2c" /><path d="M1 10C4 4 9 1 14 1M2 14l5-6 4-5M3 14c4 2 9 1 11-1" fill="none" stroke="#9cc6e6" strokeWidth="1.300" /></>],
  ["remote", 0, <><path d="M4 1h12v9H4z" fill="#35a0ea" /><path d="M4 1h12L8 8H4z" fill="#64bdf5" /><circle cx="5" cy="9" r="3.500" fill="#9fc3dc" /><path d="M3 12l-3 3" stroke="#bbb" strokeWidth="2" /></>],
  ["rec", 1, <><circle cx="8" cy="8" r="7.500" fill="none" stroke="#4f86ae" strokeWidth="1.300" /><circle cx="8" cy="8" r="2.600" fill="#a9d9f7" /></>],
  ["cmd", 1, <><path d="M0 2h16v12H0z" fill="#111" stroke="#bbb" strokeWidth=".8" /><path d="M0 2h16v2.500H0z" fill="#ccc" /><path d="M2 6.500l2 1.500-2 1.500M6 9h2.500M9.500 9H12" stroke="#ccc" fill="none" strokeWidth=".8" /></>],
  ["set", 1, <><circle cx="8" cy="8" r="4" fill="none" stroke="#fff" strokeWidth="2.200" /><path d="M8 1.500v2M8 12.500v2M1.500 8h2M12.500 8h2M3.400 3.400l1.500 1.500M11.100 11.100l1.500 1.500M3.400 12.600l1.500-1.500M11.100 4.900l1.500-1.500" stroke="#fff" strokeWidth="2.400" /></>],
  ["panel", 1, <><path d="M1 3h14v10H1z" fill="#4db7ef" /><path d="M3 5h4v4H3z" fill="#c9ecfc" /><path d="M9 5h4M9 7.500h4M3 11h3M8 11h5" stroke="#fff" /><path d="M10 7h3v4h-3z" fill="#f0c45a" /></>],
];

const QUICK = ["logo", "undo", "redo", "save", "docIn", "docOut", "preview", "print", "zoomIn", "zoomOut", "sync", "play", "stop", "panel"];
const OUTPUTS = [["output", "Output", 40.500], ["stats", "Statistics", 46], ["gear", "Resource Viewer", 72.5], ["find", "Search Results", 65], ["error", "Error List", 54.5], ["eye", "Watch List", 60.500], ["task", "Task Viewer", 60]];

export default function App() {
  return (
    <Screen>
      <Global />
      <TitleBar>
        <QuickBar>{QUICK.map((n) => <Icon key={n} name={n} color="#e9edf3" />)}</QuickBar>
        <WindowTitle>ECY_MISC_TEMPLATE* (localhost\ECY-303) - Distech Controls EC-gfxProgram</WindowTitle>
        <WindowButtons>
          <svg width="7" height="7" viewBox="0 0 7 7"><path d="M1 3.500h5" stroke="#b9c0cc" /></svg>
          <svg width="7" height="7" viewBox="0 0 7 7"><path d="M.5 2.500h4v4h-4zM2.500 2.500v-2h4v4h-2" fill="none" stroke="#b9c0cc" strokeWidth=".8" /></svg>
          <svg width="7" height="7" viewBox="0 0 7 7"><path d="M1 1l5 5M6 1L1 6" stroke="#c4cad4" /></svg>
        </WindowButtons>
      </TitleBar>
      <MenuBar>
        <MenuTab $w={36} $file>File</MenuTab>
        <MenuTab $w={42} $active>Home</MenuTab>
        <MenuTab $w={51}>Drawing</MenuTab>
        <MenuTab $w={36}>View</MenuTab>
        <MenuTab $w={40}>Tools</MenuTab>
        <MenuRight><Icon name="book" size={11} /><MenuRule /><Icon name="info" /><About>About</About></MenuRight>
      </MenuBar>
      <Ribbon>
        <RibbonGroup $w={54}>
          <GroupBody>
            <SmallColumn $w={53}>
              {[["copy", "Copy"], ["cut", "Cut"], ["paste", "Paste"]].map(([i, t], k) => <SmallButton key={t} $pl={8} $gap={5} $mt={k ? 0 : -2}><Icon name={i} color="#999" />{t}</SmallButton>)}
            </SmallColumn>
          </GroupBody>
          <GroupName>Clipboard</GroupName>
        </RibbonGroup>
        <RibbonGroup $w={224}>
          <GroupBody>
            <SmallColumn $w={47}>
              {[["undo", "Undo"], ["redo", "Redo"], ["trash", "Delete"]].map(([i, t], k) => <SmallButton key={t} $pl={4.500} $gap={5} $mt={k ? 0 : -2}><Icon name={i} color="#888" />{t}</SmallButton>)}
            </SmallColumn>
            <SmallColumn $w={107}>
              <SmallButton $pl={1.500} $mt={-2}><Icon name="duplicate" color="#999" />Duplicate</SmallButton>
              <SmallButton $pl={1.500}><Icon name="select" color="#999" />Select All</SmallButton>
              <Combo>Auto Increment (To Next)<Caret /></Combo>
            </SmallColumn>
            <BigButton $w={29}><BigIcon><Icon name="find" size={21} sw={0.95} /></BigIcon>{"Find\nObject"}</BigButton>
            <BigButton $w={39}><BigIcon><AbCd><span>ab</span><span>cd</span><svg width="6" height="6" viewBox="0 0 6 6"><path d="M.5 0v5H5" fill="none" stroke={GREEN} /></svg></AbCd></BigIcon>{"Replace\nObject"}</BigButton>
          </GroupBody>
          <GroupName>Editing</GroupName>
        </RibbonGroup>
        <RibbonGroup $w={199}>
          <GroupBody>
            <BigButton $w={35}><BigIcon><Icon name="add" size={23} sw={0.9} /></BigIcon>Add<BigIcon><Caret /></BigIcon></BigButton>
            <Rule />
            <BigButton $w={31}><BigIcon><Icon name="bricks" size={21} sw={0.9} /></BigIcon>Build</BigButton>
            <BigButton $w={38}><BigIcon><Icon name="bricksSend" size={21} sw={0.9} /></BigIcon>{"Build And\nSend"}</BigButton>
            <Rule $ml={3} />
            <BigButton $w={56}><BigIcon><Icon name="bricksSync" size={21} sw={0.9} /></BigIcon>Synchronize</BigButton>
            <BigButton $w={26}><BigIcon><Icon name="offline" size={21} sw={0.9} /></BigIcon>{"Work\nOffline"}</BigButton>
          </GroupBody>
          <GroupName>Project</GroupName>
        </RibbonGroup>
        <RibbonGroup $w={155}>
          <GroupBody>
            <BigButton $w={28}><BigIcon><Icon name="play" size={19} /></BigIcon>Start</BigButton>
            <BigButton $w={23} $dim><BigIcon><Icon name="stop" size={19} /></BigIcon>Stop</BigButton>
            <SmallColumn $w={98}>
              <SmallButton $on $pl={4} $gap={9} $mt={-2}><Check><svg width="6" height="6" viewBox="0 0 6 6"><path d="M1 3l1.500 2L5 .5" fill="none" stroke="#222" /></svg></Check>Round Debug Values</SmallButton>
              <SmallButton $on $pl={3} $gap={5.500}><Icon name="clearDebug" size={11} />Clear Debug Values</SmallButton>
            </SmallColumn>
          </GroupBody>
          <GroupName>Debugging</GroupName>
        </RibbonGroup>
        <RibbonGroup $w={63}>
          <GroupBody><BigButton $w={60}><BigIcon><Icon name="gear" size={18} sw={1} /></BigIcon>{"Open\nConfiguration"}</BigButton></GroupBody>
          <GroupName>Resources</GroupName>
        </RibbonGroup>
        <Collapse><svg width="6" height="4" viewBox="0 0 6 4"><path d="M.5 3.500L3 1l2.500 2.500" fill="none" stroke="#444" strokeWidth="1.200" /></svg></Collapse>
      </Ribbon>
      <Work>
        <LeftRail>
          <Icon name="wrench" size={10} /><RailText $h={29}>Toolbox</RailText><Icon name="book" size={10} /><RailText $h={60}>Code Library</RailText>
        </LeftRail>
        <DockPanel>
          <PanelHead>Toolbox<Pin><svg width="6" height="5" viewBox="0 0 6 5"><path d="M0 2.500h3M3 .5v4M3 1.500h2.500v2H3" fill="none" stroke="#532" strokeWidth=".9" /></svg></Pin><CloseMark /><Pointer /></PanelHead>
          <Search>Search in all toolboxes</Search>
          <Picker><PickerBox $w={97} $mr={3}>Distech Controls</PickerBox><PickerBox $w={11} $mr={6}><Chevron /></PickerBox><Icon name="info" size={9} /></Picker>
          <ToolTree />
        </DockPanel>
        <Middle>
          <Docs />
          <MiddleBody>
            <Canvas $w={52}><Banner $ox={149} $x={174} $y={376} $w={96.500} $h={10} $bg="#0cc40c" $fg="#063806">Configuration Point</Banner><ScrollTrack /></Canvas>
            <ClippedPanel>
              <Search $mt={-6}>Search in all toolboxes</Search>
              <Picker><PickerBox $w={110} $mr={7}>Distech Controls<Chevron /></PickerBox><Icon name="info" size={9} /></Picker>
              <ToolTree />
            </ClippedPanel>
          </MiddleBody>
        </Middle>
        <Right>
          <Docs full />
          <RightBody>
            <Diagram />
            <RightRail><RailText $h={33}>roperties</RailText><Icon name="explorer" size={10} /><RailText $h={70}>Project Explorer</RailText></RightRail>
          </RightBody>
        </Right>
      </Work>
      <OutputTabs>{OUTPUTS.map(([i, t, w]) => <OutputTab key={t} $w={w}><Icon name={i} size={10} sw={1.300} />{t}</OutputTab>)}</OutputTabs>
      <Status>
        <svg width="8" height="8" viewBox="0 0 8 8"><circle cx="4" cy="4" r="4" fill="#d3344c" /><path d="M2.300 2.300l3.400 3.400M5.700 2.300L2.300 5.700" stroke="#fff" strokeWidth="1.100" /></svg>
        Build failed<Spacer />localhost<Dot $m={4} />ECY-303 (Local Device)<Dot />
      </Status>
      <Taskbar>
        <StartButton><svg width="12" height="12" viewBox="0 0 12 12"><path d="M0 1.800L5.300 1v4.700H0zM6 .9L12 0v5.700H6zM0 6.300h5.300V11L0 10.200zM6 6.300h6V12l-6-.9z" fill="#fff" /></svg></StartButton>
        <SearchBox>
          <svg width="14" height="14" viewBox="0 0 14 14"><circle cx="7" cy="7" r="5.800" fill="none" stroke="#111" strokeWidth="1.700" /></svg>
          Type here to search
          <svg width="8" height="12" viewBox="0 0 8 12"><rect x="2.200" y="0" width="3.600" height="7" rx="1.800" fill="#222" /><path d="M.5 5v1.500a3.500 3 0 0 0 7 0V5M4 9.500V12M2 11.500h4" fill="none" stroke="#222" strokeWidth=".8" /></svg>
        </SearchBox>
        {APPS.map(([id, s, art]) => <TaskButton key={id} $run={s > 0} $active={s === 2}><svg width="15" height="15" viewBox="0 0 16 16">{art}</svg></TaskButton>)}
        <Tray>
          <svg width="11" height="12" viewBox="0 0 11 12" {...W} strokeWidth="1"><circle cx="7.500" cy="3" r="2" /><circle cx="3.500" cy="6" r="1.800" /><path d="M.5 11.500C1 8 6 8 6.500 11.500M5.500 6.500c2-2 5-1 5 2" /></svg>
          <svg width="34" height="12" viewBox="0 0 34 12" {...W} strokeWidth="1"><path d="M15.500 7.500L19 4l3.500 3.500" /></svg>
          <svg width="12" height="12" viewBox="0 0 12 12" {...W} strokeWidth=".9"><path d="M3.500 2h8v6h-8zM.5 2v3.500h2V2M1.500 5.500V10H6" /><path d="M8.500 5l3.500 6H5z" fill="#f7c531" stroke="none" /></svg>
          <svg width="16" height="12" viewBox="0 0 16 12" {...W} strokeWidth=".9"><path d="M4 4.500h1.500L8.500 2v8L5.500 7.500H4zM10 4.500q1 1.500 0 3M12 3q2 3 0 6M14 2q2.500 4 0 8" /></svg>
          <Clock>1:55 PM<br />7/23/2019</Clock>
          <svg width="20" height="16" viewBox="0 0 20 16"><path d="M2 1h11v9H7l-2.500 3v-3H2z" fill="#fff" /><path d="M4 4h7M4 6.500h7" stroke="#222" /><circle cx="12.500" cy="11" r="4.800" fill="#2d2d2d" stroke="#777" strokeWidth=".8" /><text x="12.500" y="13.700" fontSize="8" fill="#fff" textAnchor="middle">1</text></svg>
          <DesktopEdge />
        </Tray>
      </Taskbar>
    </Screen>
  );
}
